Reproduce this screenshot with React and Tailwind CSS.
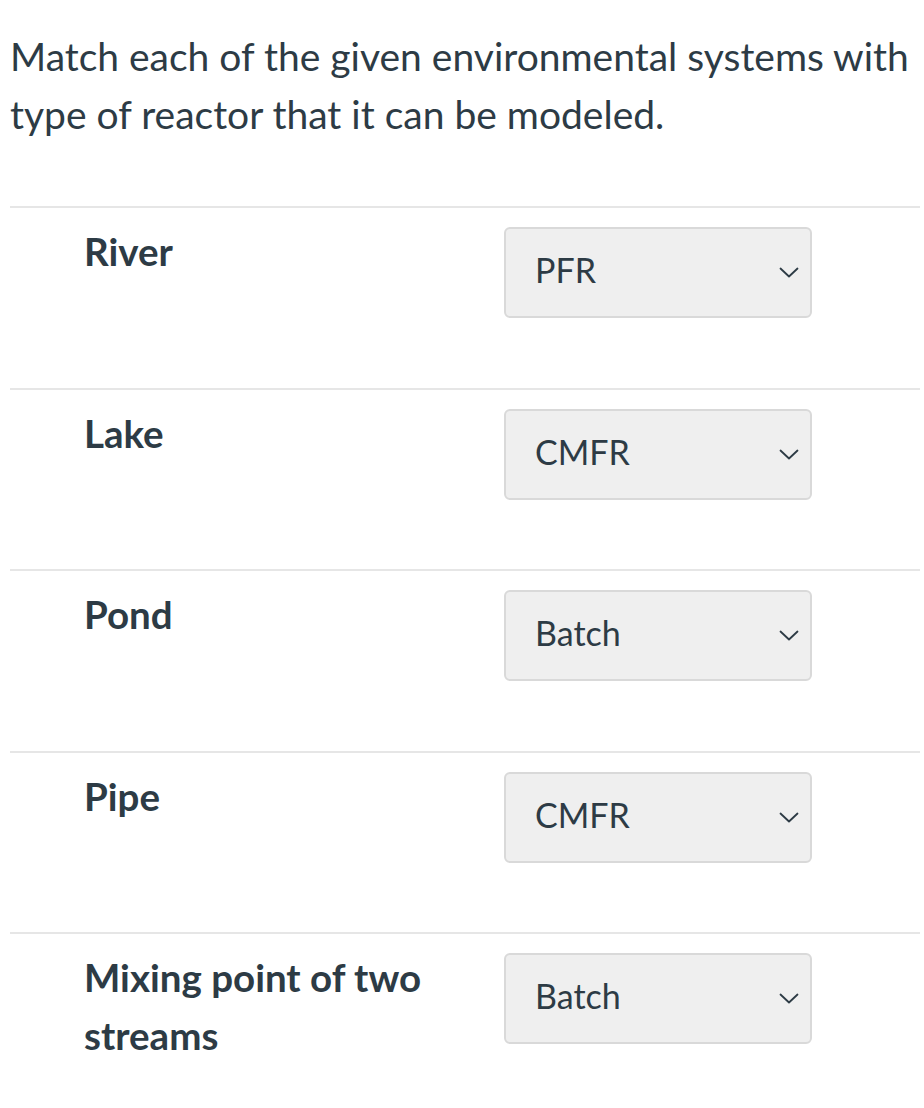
import React from "react";

const rows = [
  { label: "River", value: "PFR" },
  { label: "Lake", value: "CMFR" },
  { label: "Pond", value: "Batch" },
  { label: "Pipe", value: "CMFR" },
  { label: "Mixing point of two streams", value: "Batch" },
];

function Chevron() {
  return (
    <svg width="20" height="11" viewBox="0 0 20 11" fill="none" className="shrink-0">
      <path d="M1.5 1.5 L10 9.5 L18.5 1.5" stroke="#2d3b45" strokeWidth="1.8" strokeLinecap="round" strokeLinejoin="round" />
    </svg>
  );
}

export default function App() {
  return (
    <div
      className="bg-white w-[924px] min-h-[1108px] pl-[10px] pr-[4px] text-[#2d3b45]"
      style={{ fontFamily: "Lato, 'Noto Sans', sans-serif" }}
    >
      <div className="pt-[27px] pb-[63px] text-[39px] leading-[58px]">
        Match each of the given environmental systems with type of reactor that it can be modeled.
      </div>
      {rows.map((r, i) => (
        <div key={i} className="border-t-2 border-[#e6e6e6] h-[181.5px] flex">
          <div className="pt-[14px] w-[494px] pl-[74px] pr-[40px] font-bold text-[38.5px] leading-[58px]">
            {r.label}
          </div>
          <div className="mt-[19px] w-[308px] h-[91px] rounded-[6px] border-2 border-[#d9d9d9] bg-[#efefef] flex items-center justify-between pl-[29px] pr-[11px]">
            <span className="text-[34px] leading-none pb-[5px]">{r.value}</span>
            <Chevron />
          </div>
        </div>
      ))}
    </div>
  );
}
